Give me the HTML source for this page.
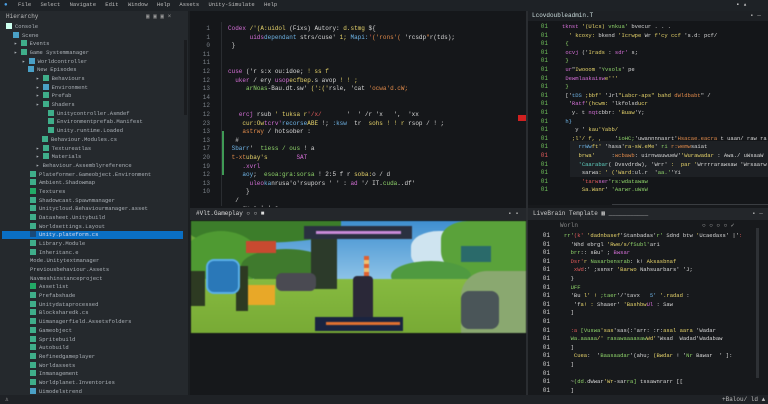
<!DOCTYPE html><html><head><style>
*{margin:0;padding:0;box-sizing:border-box}
body{width:768px;height:404px;overflow:hidden;background:#1b1e21;font-family:"Liberation Mono",monospace;position:relative}
.a{position:absolute}
.clip{position:absolute;overflow:hidden}
.t{position:absolute;font-size:6px;line-height:8px;white-space:nowrap;color:#c8c8c8}
.ln{position:absolute;font-size:6px;line-height:8.6px;color:#7a8088;text-align:right;white-space:pre}
.code{position:absolute;font-size:6px;line-height:8.6px;white-space:pre;color:#cfcfcf;filter:blur(0.3px)}
.p{color:#d46fd6}.y{color:#e6d36a}.o{color:#e08a4a}.g{color:#8fd46a}.b{color:#6fb4e6}.r{color:#e05a5a}.w{color:#d8d8d8}.c{color:#5fcfc0}
.ic{display:inline-block;width:6px;height:6px;background:#3fae8a;margin-right:3px;vertical-align:-1px}
.tree div{position:absolute;font-size:5.5px;color:#aab0b6;white-space:nowrap;height:8px;line-height:8px;filter:blur(0.3px)}
</style></head><body>
<div class="a" style="left:0;top:0;width:768px;height:11px;background:#1e2226"></div>
<div class="t" style="left:4px;top:1px;color:#4aa0e6">●</div>
<div class="t" style="left:18px;top:1px;color:#bbb;font-size:5.5px;word-spacing:6px">File Select Navigate Edit Window Help Assets Unity-Simulate Help</div>
<div class="t" style="left:736px;top:1px;color:#ccc">▪ ▴</div>
<div class="a" style="left:0;top:11px;width:188px;height:384px;background:#25292d"></div>
<div class="a" style="left:184px;top:40px;width:3px;height:75px;background:#1a1c1f"></div>
<div class="t" style="left:6px;top:13px;color:#bbb">Hierarchy</div>
<div class="t" style="left:146px;top:13px;color:#999">▣ ▣ ▣ ×</div>
<div class="a" style="left:2px;top:231px;width:181px;height:8px;background:#0a6fc4"></div>
<div class="tree">
<div style="left:6px;top:23px"><span class="ic" style="background:#cfe"></span>Console</div>
<div style="left:13px;top:32px"><span class="ic" style="background:#4aa0c6"></span>Scene</div>
<div style="left:14px;top:40px">▸ <span class="ic"></span>Events</div>
<div style="left:14px;top:49px">▸ <span class="ic"></span>Game Systemmanager</div>
<div style="left:22px;top:58px">▸ <span class="ic" style="background:#4aa0c6"></span>Worldcontroller</div>
<div style="left:28px;top:66px"><span class="ic" style="background:#4aa0c6"></span>New Episodes</div>
<div style="left:36px;top:75px">▸ <span class="ic"></span>Behaviours</div>
<div style="left:36px;top:84px">▸ <span class="ic" style="background:#4aa0c6"></span>Environment</div>
<div style="left:36px;top:92px">▸ <span class="ic"></span>Prefab</div>
<div style="left:36px;top:101px">▸ <span class="ic"></span>Shaders</div>
<div style="left:48px;top:110px"><span class="ic"></span>Unitycontroller.Asmdef</div>
<div style="left:48px;top:118px"><span class="ic"></span>Environmentprefab.Manifest</div>
<div style="left:48px;top:127px"><span class="ic"></span>Unity.runtime.Loaded</div>
<div style="left:42px;top:136px"><span class="ic"></span>Behaviour.Modules.cs</div>
<div style="left:36px;top:145px">▸ <span class="ic"></span>Textureatlas</div>
<div style="left:36px;top:153px">▸ <span class="ic"></span>Materials</div>
<div style="left:36px;top:162px">▸ Behaviour.Assemblyreference</div>
<div style="left:30px;top:171px"><span class="ic"></span>Plateformer.Gameobject.Environment</div>
<div style="left:30px;top:179px"><span class="ic"></span>Ambient.Shadowmap</div>
<div style="left:30px;top:188px"><span class="ic" style="background:#2a6"></span>Textures</div>
<div style="left:30px;top:197px"><span class="ic"></span>Shadowcast.Spawnmanager</div>
<div style="left:30px;top:205px"><span class="ic"></span>Unitycloud.Behaviourmanager.asset</div>
<div style="left:30px;top:214px"><span class="ic"></span>Datasheet.Unitybuild</div>
<div style="left:30px;top:223px"><span class="ic"></span>Worldsettings.Layout</div>
<div style="left:30px;top:231px;color:#dde"><span class="ic" style="background:#1a4a7a"></span>Unity.plateform.cs</div>
<div style="left:30px;top:240px"><span class="ic"></span>Library.Module</div>
<div style="left:30px;top:249px"><span class="ic"></span>Inheritanc.e</div>
<div style="left:30px;top:257px">Mode.Unitytextmanager</div>
<div style="left:30px;top:266px">Previousbehaviour.Assets</div>
<div style="left:30px;top:275px">Navmeshinstanceproject</div>
<div style="left:30px;top:283px"><span class="ic" style="background:#2a6"></span>Assetlist</div>
<div style="left:30px;top:292px"><span class="ic"></span>Prefabshade</div>
<div style="left:30px;top:301px"><span class="ic"></span>Unitydataprocessed</div>
<div style="left:30px;top:309px"><span class="ic"></span>Blocksharedk.cs</div>
<div style="left:30px;top:318px"><span class="ic"></span>Uimanagerfield.Assetsfolders</div>
<div style="left:30px;top:327px"><span class="ic"></span>Gameobject</div>
<div style="left:30px;top:336px"><span class="ic"></span>Spritebuild</div>
<div style="left:30px;top:344px"><span class="ic"></span>Autobuild</div>
<div style="left:30px;top:353px"><span class="ic"></span>Refinedgameplayer</div>
<div style="left:30px;top:362px"><span class="ic"></span>Worldassets</div>
<div style="left:30px;top:370px"><span class="ic"></span>Inmanagement</div>
<div style="left:30px;top:379px"><span class="ic"></span>Worldplanet.Inventories</div>
<div style="left:30px;top:388px"><span class="ic" style="background:#4aa0c6"></span>Uimodelstrend</div>
</div>
<div class="a" style="left:190px;top:11px;width:336px;height:197px;background:#15171a"></div>
<div class="a" style="left:221px;top:22px;width:1px;height:184px;background:#2a2d31"></div>
<div class="a" style="left:222px;top:131px;width:2px;height:44px;background:#3f9a55"></div>
<div class="clip" style="left:190px;top:20px;width:330px;height:187px">
<div class="ln" style="left:6px;top:5px;width:14px">1
1
0
11
11
12
12
13
14
12
12
23
13
13
17
20
19
12
13
10</div>
<div class="code" style="left:38px;top:5px"><span class="p">Codex</span> <span class="y">/'(A:uidol</span> <span class="w">(Fixs) Autory:</span> <span class="y">d.stmg</span> <span class="w">${</span>
      <span class="p">uids</span><span class="b">dependant</span> <span class="w">strs/cuse'</span> <span class="y">1;</span> <span class="b">Mapi:</span><span class="r">'</span><span class="o">('rons'(</span> <span class="w">'rcsdp</span><span class="o">"</span><span class="w">r(tds);</span>
 <span class="w">}</span>


<span class="p">cuse</span> <span class="w">('r s:x ou:idoe;</span> <span class="y">! ss f</span>
  <span class="p">uker</span> <span class="w">/ ery</span> <span class="p">usop</span><span class="y">ecfbep.</span><span class="w">s avop</span> <span class="y">! ! ;</span>
     <span class="g">arNoas</span><span class="w">-Bau.dt.sw'</span> <span class="y">(':('</span><span class="w">rsle, 'cat</span> <span class="o">'ocwa'd.cW;</span>


   <span class="p">ercj</span> <span class="w">rsub</span> <span class="y">' tuksa r</span><span class="r">'/x/</span>       <span class="w">'  ' /r 'x   ',  'xx</span>
    <span class="y">cur:Ow</span><span class="p">tcrv'</span><span class="b">recorse</span><span class="y">ABE</span> <span class="w">!;</span> <span class="b">:ksw</span>  <span class="w">tr</span>  <span class="y">sohs ! ! r</span> <span class="w">rsop / ! ;</span>
    <span class="o">astrwy</span> <span class="w">/ hotsober :</span>
  <span class="w">#</span>
 <span class="b">Sbarr</span><span class="w">'</span>  <span class="g">tiess / ous</span> <span class="w">! a</span>
 <span class="o">t-xt</span><span class="y">ubay's</span>        <span class="p">SAT</span>
    <span class="p">.xvrl</span>
    <span class="b">aoy</span><span class="w">;</span>  <span class="g">esoa:gra:sorsa</span> <span class="w">! 2:5 f r</span> <span class="y">soba:</span><span class="w">o / d</span>
      <span class="p">uleo</span><span class="b">ka</span><span class="w">nrusa'o'rsupors ' ' :</span> <span class="p">ad</span> <span class="w">'/ IT.</span><span class="g">cuda</span><span class="w">..df'</span>
     <span class="w">}</span>
  <span class="w">/</span>
    <span class="w">ru s ! ! c</span></div>
</div>
<div class="a" style="left:526px;top:11px;width:2px;height:393px;background:#2a2d31"></div>
<div class="a" style="left:528px;top:11px;width:240px;height:194px;background:#141619"></div>
<div class="a" style="left:528px;top:11px;width:240px;height:10px;background:#1d2024"></div>
<div class="t" style="left:532px;top:12px;color:#cdd">Lcovdoubleadmin.T</div>
<div class="t" style="left:750px;top:12px;color:#aaa">▪ ─</div>
<div class="a" style="left:518px;top:115px;width:8px;height:6px;background:#d02020"></div>
<div class="a" style="left:570px;top:141px;width:198px;height:36px;background:#1d2024"></div>
<div class="clip" style="left:528px;top:21px;width:240px;height:183px">
<div class="ln" style="left:8px;top:2px;width:12px;color:#6fbf5a">01
01
01
01
01
01
01
01
01
01
01
01
01
01
01
<span class="r">01</span>
01
01
01
01</div>
<div class="code" style="left:34px;top:2px;font-size:5.5px"><span class="p">tknst</span> <span class="y">'(Ulcs)</span> <span class="g">vnkua'</span> <span class="w">bvecur . . .</span>
  <span class="y">' kcoxy:</span> <span class="w">bkend</span> <span class="y">'Icrwpe</span> <span class="w">Wr</span> <span class="y">f'cy ccf</span> <span class="w">'s.d: pcf/</span>
 <span class="g">{</span>
 <span class="p">ocvj</span> <span class="w">('</span><span class="y">Irads</span> <span class="w">:</span> <span class="p">sdr'</span> <span class="w">s;</span>
 <span class="g">}</span>
 <span class="p">ur</span><span class="w">"</span><span class="y">Iwooom</span> <span class="w">'</span><span class="g">Yvsols</span><span class="w">' pe</span>
 <span class="p">Dewmlaakaisw</span><span class="y">e'''</span>
 <span class="g">}</span>
 <span class="w">['</span><span class="b">tDS</span> <span class="y">;bbf'</span> <span class="w">'Jrl</span><span class="y">"Labcr-aps" bahd</span> <span class="o">dWldbabt</span><span class="w">" /</span>
  <span class="w">'</span><span class="p">Ratf</span><span class="y">'(hcwm:</span> <span class="w">'lkfolsd</span><span class="y">ucr</span>
   <span class="w">y. t</span> <span class="p">nqt</span><span class="w">cbbr:</span> <span class="y">'Buaw</span><span class="w">'Y;</span>
 <span class="b">h}</span>
    <span class="w">y ' </span><span class="y">kau'Yabb/</span>
   <span class="y">;l'/ f, ,</span>    <span class="w">'</span><span class="g">ioHC;</span><span class="w">'uwannnnasrt'</span><span class="o">Hsacae.eacra</span> <span class="w">t uaan/ raw ra.</span>
     <span class="b">rrWw</span><span class="y">ft'</span> <span class="w">'hasa'</span><span class="y">ra-sW.eMe</span><span class="w">'</span> <span class="g">ri</span> <span class="o">r:wemw</span><span class="w">saiat</span>
     <span class="y">brwa'</span>     <span class="w">:</span><span class="o">wcbawb</span><span class="w">: uirnwauwueW'</span><span class="y">'Wurawadar</span> <span class="w">: Awa./ uWsaaW</span>
     <span class="c">'Caarabar</span><span class="w">( Dvsvdrdw), 'Wrr'</span> <span class="y">:  par '</span><span class="w">Wrrrrarawsaw 'Wrsaarw</span>
      <span class="w">sarwa</span><span class="y">: ' ('Ward</span><span class="w">:ul.r  '</span><span class="g">aa.'</span><span class="w">'Yi</span>
      <span class="r">'tarw</span><span class="p">ser</span><span class="w">'</span><span class="g">rs:wdatawaw</span>
      <span class="y">Sa.Wanr</span><span class="w">'</span> <span class="g">'Aarwr.uWsW</span></div>
</div>
<div class="a" style="left:612px;top:204px;width:156px;height:3px;background:#3a3d41"></div>
<div class="a" style="left:190px;top:208px;width:336px;height:196px;background:#16181b"></div>
<div class="a" style="left:190px;top:208px;width:336px;height:12px;background:#24272b"></div>
<div class="t" style="left:196px;top:210px;color:#ddd">#Vlt.Gameplay ○ ○ ■</div>
<div class="t" style="left:508px;top:210px;color:#aaa">▪ ▪</div>
<div class="a" style="left:191px;top:221px;width:335px;height:112px;overflow:hidden;background:#6da83a;filter:blur(0.6px)">
 <div class="a" style="left:40px;top:0;width:240px;height:60px;background:linear-gradient(#3f8fd0,#8fc4e8)"></div>
 <div class="a" style="left:220px;top:10px;width:70px;height:40px;background:#cfe4f0;border-radius:40%"></div>
 <div class="a" style="left:0;top:0;width:150px;height:22px;background:#3c7d2a;border-radius:0 0 60% 40%"></div>
 <div class="a" style="left:-10px;top:10px;width:80px;height:60px;background:#4f9a32;border-radius:50%"></div>
 <div class="a" style="left:50px;top:28px;width:90px;height:35px;background:#3f7a2d;border-radius:50%"></div>
 <div class="a" style="left:250px;top:0;width:90px;height:60px;background:#5aa23a;border-radius:30% 0 0 50%"></div>
 <div class="a" style="left:200px;top:40px;width:80px;height:30px;background:#4f9a40;border-radius:50%"></div>
 <div class="a" style="left:0;top:58px;width:335px;height:54px;background:linear-gradient(#86ba40,#78aa35)"></div>
 <div class="a" style="left:270px;top:50px;width:65px;height:62px;background:#8aa870;border-radius:40% 0 0 0"></div>
 <div class="a" style="left:120px;top:8px;width:26px;height:60px;background:#2c3a2a"></div>
 <div class="a" style="left:0px;top:50px;width:14px;height:35px;background:#2d3a22"></div>
 <div class="a" style="left:45px;top:45px;width:12px;height:45px;background:#2d3a22"></div>
 <div class="a" style="left:113px;top:5px;width:108px;height:13px;background:#2a3040"></div>
 <div class="a" style="left:125px;top:10px;width:85px;height:3px;background:#c88ad8"></div>
 <div class="a" style="left:173px;top:35px;width:5px;height:35px;background:repeating-linear-gradient(#e06030 0 4px,#f0c070 4px 8px)"></div>
 <div class="a" style="left:162px;top:55px;width:20px;height:50px;background:#2a2838;border-radius:4px"></div>
 <div class="a" style="left:55px;top:20px;width:30px;height:12px;background:#c84a30"></div>
 <div class="a" style="left:15px;top:38px;width:34px;height:35px;background:#2a78b8;border:2px solid #5ab0e8;border-radius:8px"></div>
 <div class="a" style="left:57px;top:64px;width:27px;height:20px;background:#e8a828"></div>
 <div class="a" style="left:85px;top:52px;width:40px;height:18px;background:#4a4a52;border-radius:6px"></div>
 <div class="a" style="left:124px;top:96px;width:88px;height:14px;background:#1a2440"></div>
 <div class="a" style="left:135px;top:101px;width:74px;height:3px;background:#e07030"></div>
 <div class="a" style="left:270px;top:70px;width:38px;height:38px;background:#4a5558;border-radius:8px"></div>
 <div class="a" style="left:270px;top:25px;width:30px;height:16px;background:#2a6a6a"></div>
</div>
<div class="a" style="left:528px;top:205px;width:240px;height:199px;background:#17191c"></div>
<div class="a" style="left:528px;top:208px;width:240px;height:12px;background:#23262a"></div>
<div class="t" style="left:533px;top:210px;color:#ccc">LiveBrain Template  ▦  ___________</div>
<div class="t" style="left:752px;top:210px;color:#aaa">▪ ─</div>
<div class="t" style="left:560px;top:222px;color:#888">Worln</div>
<div class="t" style="left:702px;top:222px;color:#bbb">○ ○ ○ ○ ✓</div>
<div class="a" style="left:756px;top:228px;width:3px;height:150px;background:#2e3135"></div>
<div class="clip" style="left:528px;top:230px;width:228px;height:165px">
<div class="ln" style="left:10px;top:2px;width:12px;color:#d0d0d0">01
01
01
01
01
01
01
01
01
01
01
01
01
01
01
01
01
01
01</div>
<div class="code" style="left:36px;top:2px;font-size:5.5px"><span class="g">rr'</span><span class="r">(k'</span> <span class="y">'dadnbasef</span><span class="w">'Stanbadas'</span><span class="g">r'</span> <span class="w">Sdnd btw</span> <span class="y">'</span><span class="w">Ucaedaxs' |'</span><span class="r">:</span>
  <span class="w">'Nhd ebrgl</span> <span class="y">'Rwe/s/</span><span class="g">fSubl'</span><span class="w">ar1</span>
  <span class="g">brr</span><span class="w">:: sBu' ;</span> <span class="p">Bwsar</span>
  <span class="r">Dsr'</span><span class="y">r</span> <span class="g">Nasarbensrab</span><span class="w">: k!</span> <span class="y">Aksasbnaf</span>
   <span class="r">xWd</span><span class="w">:' ;ssnsr</span> <span class="y">'Barwo</span> <span class="w">Nahsuarbars' 'J;</span>
  <span class="w">}</span>
  <span class="g">UFF</span>
  <span class="w">'Bu</span> <span class="y">l' !</span> <span class="g">;taer</span><span class="w">'/'tavx</span>   <span class="b">5'</span> <span class="y">'.radad</span> <span class="w">:</span>
   <span class="w">'f</span><span class="y">a! :</span> <span class="w">Shaaer'</span> <span class="y">'Bashbw</span><span class="p">Ul</span><span class="w"> : Saw</span>
  <span class="w">]</span>

  <span class="r">:a</span> <span class="g">[Vuswa</span><span class="y">'sas</span><span class="w">'sas(:'arr: :r:</span><span class="y">asal aara</span> <span class="w">'Wadar</span>
  <span class="g">Wa.aaaaa</span><span class="y">/'</span> <span class="g">rasawaaaasaw</span><span class="y">Wd'</span><span class="w">'Wsad  Wadad'Wadabaw</span>
  <span class="w">]</span>
   <span class="y">Cuea</span><span class="w">:  '</span><span class="g">Baasaadar</span><span class="w">'(ahu;</span> <span class="y">(Bwdar</span><span class="w"> ! '</span><span class="g">Nr</span><span class="w"> Bawar  ' ]:</span>
  <span class="w">]</span>

  <span class="w">~</span><span class="g">(dd.</span><span class="w">dWwar</span><span class="y">'Wr</span><span class="w">-sar</span><span class="g">ra]</span><span class="w"> tssawnrarr [[</span>
  <span class="w">]</span></div>
</div>
<div class="a" style="left:0;top:395px;width:768px;height:9px;background:#1f2226"></div>
<div class="t" style="left:5px;top:396px;color:#aaa">♙</div>
<div class="t" style="left:722px;top:396px;color:#bbb">+Balou/ ld  ▲</div>
</body></html>
